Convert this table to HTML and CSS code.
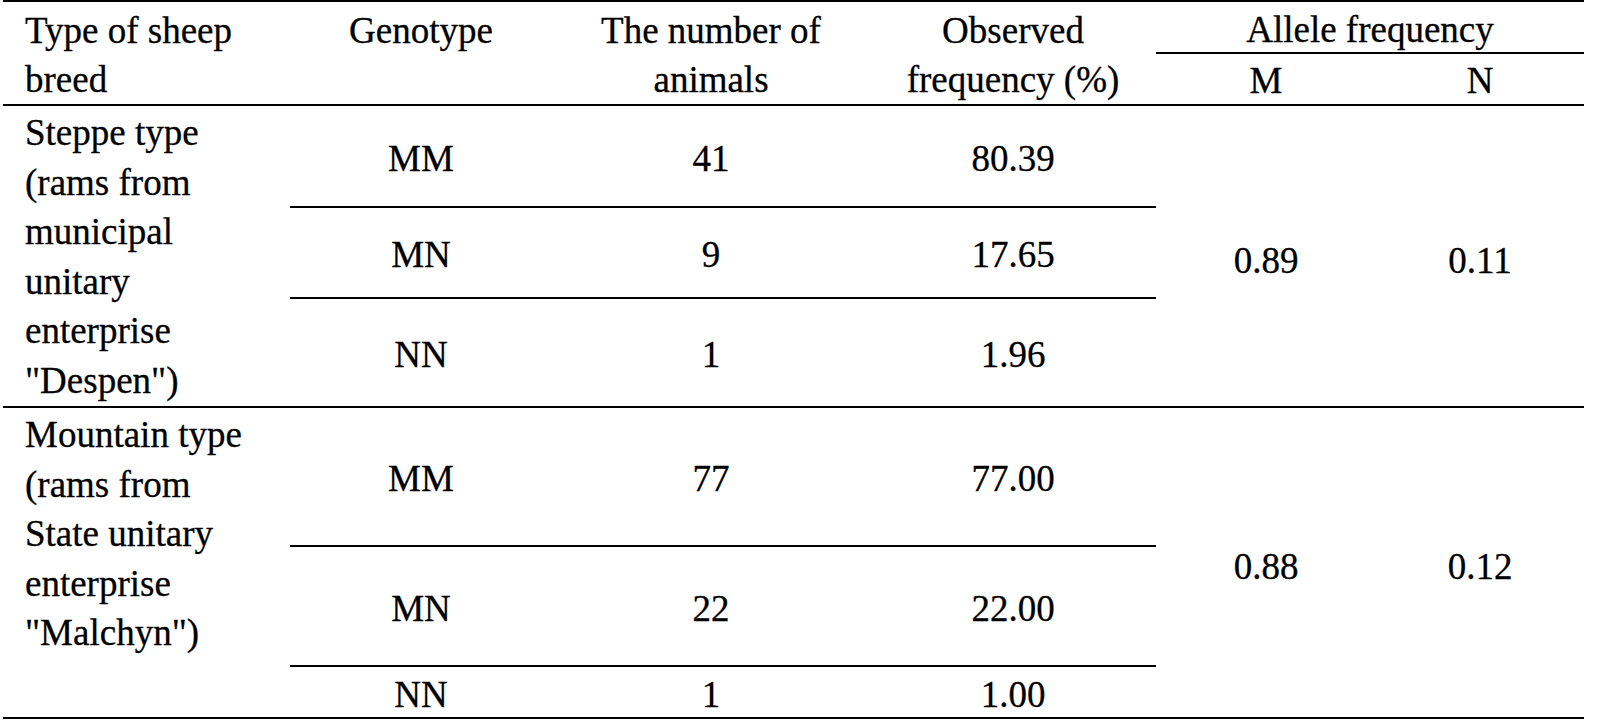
FILE: index.html
```html
<!DOCTYPE html>
<html lang="en">
<head>
<meta charset="utf-8">
<title>Allele frequency table</title>
<link rel="stylesheet" href="styles.css">
</head>
<body>
<table class="tbl">
  <colgroup>
    <col class="w-breed">
    <col class="w-geno">
    <col class="w-num">
    <col class="w-obs">
    <col class="w-m">
    <col class="w-n">
  </colgroup>
  <thead>
    <tr class="h1">
      <th rowspan="2" class="hbreed">Type of sheep breed</th>
      <th rowspan="2" class="hspan">Genotype</th>
      <th rowspan="2" class="hspan">The number of animals</th>
      <th rowspan="2" class="hspan">Observed frequency (%)</th>
      <th colspan="2" class="allele">Allele frequency</th>
    </tr>
    <tr class="h2">
      <th class="hmn">M</th>
      <th class="hmn">N</th>
    </tr>
  </thead>
  <tbody>
    <tr class="s1">
      <td rowspan="3" class="breed">Steppe type (rams from municipal unitary enterprise "Despen")</td>
      <td class="sub">MM</td>
      <td class="sub">41</td>
      <td class="sub">80.39</td>
      <td rowspan="3" class="af">0.89</td>
      <td rowspan="3" class="af">0.11</td>
    </tr>
    <tr class="s2">
      <td class="sub">MN</td>
      <td class="sub">9</td>
      <td class="sub">17.65</td>
    </tr>
    <tr class="s3">
      <td class="sub">NN</td>
      <td class="sub">1</td>
      <td class="sub">1.96</td>
    </tr>
    <tr class="m1">
      <td rowspan="3" class="breed">Mountain type (rams from State unitary enterprise "Malchyn")</td>
      <td class="sub">MM</td>
      <td class="sub">77</td>
      <td class="sub">77.00</td>
      <td rowspan="3" class="af">0.88</td>
      <td rowspan="3" class="af">0.12</td>
    </tr>
    <tr class="m2">
      <td class="sub">MN</td>
      <td class="sub">22</td>
      <td class="sub">22.00</td>
    </tr>
    <tr class="m3">
      <td class="sub">NN</td>
      <td class="sub">1</td>
      <td class="sub">1.00</td>
    </tr>
  </tbody>
</table>
</body>
</html>
```

FILE: styles.css
```css
html, body {
  margin: 0;
  padding: 0;
  background: #ffffff;
}

.tbl {
  margin-left: 3px;
  width: 1581px;
  table-layout: fixed;
  border-collapse: separate;
  border-spacing: 0;
  border-top: 2px solid #000;
  font-family: "Liberation Serif", "Times New Roman", serif;
  font-size: 37px;
  color: #000;
  -webkit-text-stroke: 0.3px #000;
}

.w-breed { width: 287px; }
.w-geno { width: 262px; }
.w-num { width: 318px; }
.w-obs { width: 286px; }
.w-m { width: 220px; }
.w-n { width: 208px; }

.tbl th {
  font-weight: normal;
  padding: 0;
  text-align: center;
  vertical-align: top;
  line-height: 49px;
}

.tbl .hspan,
.tbl .hbreed {
  padding-top: 4px;
  border-bottom: 2px solid #000;
}

.tbl .hbreed {
  text-align: left;
  padding-left: 22px;
  padding-right: 30px;
}

.tbl .allele {
  padding-top: 6px;
  line-height: 44px;
  border-bottom: 2px solid #000;
}

.tbl .hmn {
  padding-top: 4px;
  line-height: 46px;
  border-bottom: 2px solid #000;
}

.h1 { height: 52px; }
.h2 { height: 52px; }

.s1 { height: 102px; }
.s2 { height: 91px; }
.s3 { height: 109px; }
.m1 { height: 139px; }
.m2 { height: 120px; }
.m3 { height: 52px; }

.tbl td {
  padding: 4px 0 0 0;
  text-align: center;
  vertical-align: middle;
  line-height: 41px;
  border-bottom: 2px solid #000;
}

.tbl td.breed {
  text-align: left;
  vertical-align: top;
  padding: 2px 30px 0 22px;
  line-height: 49.6px;
}

.tbl td.af {
  padding-top: 8px;
}
```
